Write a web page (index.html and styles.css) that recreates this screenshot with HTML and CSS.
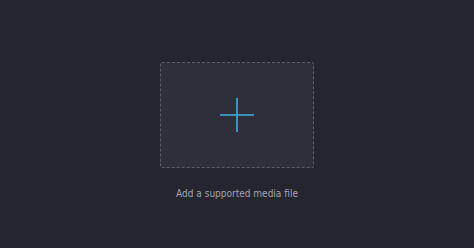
FILE: index.html
```html
<!DOCTYPE html>
<html>
<head>
<meta charset="utf-8">
<link rel="stylesheet" href="styles.css">
</head>
<body>
<div class="page">
  <div class="drop">
    <svg class="plus" width="34" height="34" viewBox="0 0 34 34">
      <line x1="0" y1="17" x2="34" y2="17" stroke="#3cb0e2" stroke-width="1.6"/>
      <line x1="17" y1="0" x2="17" y2="34" stroke="#3cb0e2" stroke-width="1.6"/>
    </svg>
  </div>
  <div class="label">Add a supported media file</div>
</div>
</body>
</html>
```
FILE: styles.css
```css
html, body {
  margin: 0;
  padding: 0;
  background: #24252f;
  width: 474px;
  height: 248px;
  overflow: hidden;
}
.page {
  display: flex;
  flex-direction: column;
  align-items: center;
  padding-top: 62px;
}
.drop {
  width: 152px;
  height: 104px;
  border: 1px dashed #5a5b68;
  background: #2f2f3c;
  border-radius: 2px;
  display: flex;
  align-items: center;
  justify-content: center;
}
.label {
  margin-top: 19px;
  font-family: "DejaVu Sans Condensed", "Liberation Sans", sans-serif;
  font-stretch: condensed;
  font-size: 10px;
  color: #a3a3ad;
  line-height: 14px;
}
```
